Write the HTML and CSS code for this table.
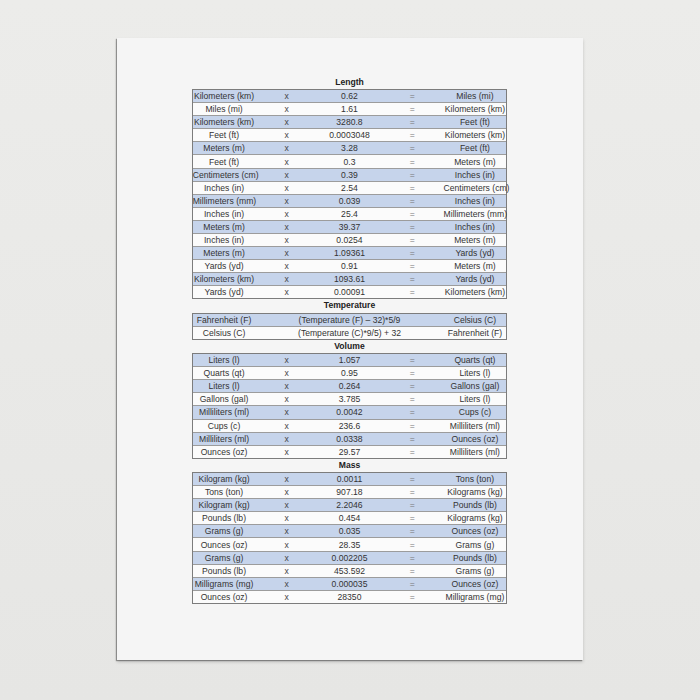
FILE: index.html
```html
<!DOCTYPE html>
<html>
<head>
<meta charset="utf-8">
<link rel="stylesheet" href="styles.css">
</head>
<body>
<div class="poster">
  <div class="sheet">
    <div class="title">Length</div>
    <div class="tbl">
      <div class="row b"><span>Kilometers (km)</span><span class="op">x</span><span>0.62</span><span class="eq">=</span><span>Miles (mi)</span></div>
      <div class="row"><span>Miles (mi)</span><span class="op">x</span><span>1.61</span><span class="eq">=</span><span>Kilometers (km)</span></div>
      <div class="row b"><span>Kilometers (km)</span><span class="op">x</span><span>3280.8</span><span class="eq">=</span><span>Feet (ft)</span></div>
      <div class="row"><span>Feet (ft)</span><span class="op">x</span><span>0.0003048</span><span class="eq">=</span><span>Kilometers (km)</span></div>
      <div class="row b"><span>Meters (m)</span><span class="op">x</span><span>3.28</span><span class="eq">=</span><span>Feet (ft)</span></div>
      <div class="row"><span>Feet (ft)</span><span class="op">x</span><span>0.3</span><span class="eq">=</span><span>Meters (m)</span></div>
      <div class="row b"><span>Centimeters (cm)</span><span class="op">x</span><span>0.39</span><span class="eq">=</span><span>Inches (in)</span></div>
      <div class="row"><span>Inches (in)</span><span class="op">x</span><span>2.54</span><span class="eq">=</span><span>Centimeters (cm)</span></div>
      <div class="row b"><span>Millimeters (mm)</span><span class="op">x</span><span>0.039</span><span class="eq">=</span><span>Inches (in)</span></div>
      <div class="row"><span>Inches (in)</span><span class="op">x</span><span>25.4</span><span class="eq">=</span><span>Millimeters (mm)</span></div>
      <div class="row b"><span>Meters (m)</span><span class="op">x</span><span>39.37</span><span class="eq">=</span><span>Inches (in)</span></div>
      <div class="row"><span>Inches (in)</span><span class="op">x</span><span>0.0254</span><span class="eq">=</span><span>Meters (m)</span></div>
      <div class="row b"><span>Meters (m)</span><span class="op">x</span><span>1.09361</span><span class="eq">=</span><span>Yards (yd)</span></div>
      <div class="row"><span>Yards (yd)</span><span class="op">x</span><span>0.91</span><span class="eq">=</span><span>Meters (m)</span></div>
      <div class="row b"><span>Kilometers (km)</span><span class="op">x</span><span>1093.61</span><span class="eq">=</span><span>Yards (yd)</span></div>
      <div class="row"><span>Yards (yd)</span><span class="op">x</span><span>0.00091</span><span class="eq">=</span><span>Kilometers (km)</span></div>
    </div>

    <div class="title">Temperature</div>
    <div class="tbl">
      <div class="row b"><span>Fahrenheit (F)</span><span class="wide">(Temperature (F) – 32)*5/9</span><span>Celsius (C)</span></div>
      <div class="row"><span>Celsius (C)</span><span class="wide">(Temperature (C)*9/5) + 32</span><span>Fahrenheit (F)</span></div>
    </div>

    <div class="title">Volume</div>
    <div class="tbl">
      <div class="row b"><span>Liters (l)</span><span class="op">x</span><span>1.057</span><span class="eq">=</span><span>Quarts (qt)</span></div>
      <div class="row"><span>Quarts (qt)</span><span class="op">x</span><span>0.95</span><span class="eq">=</span><span>Liters (l)</span></div>
      <div class="row b"><span>Liters (l)</span><span class="op">x</span><span>0.264</span><span class="eq">=</span><span>Gallons (gal)</span></div>
      <div class="row"><span>Gallons (gal)</span><span class="op">x</span><span>3.785</span><span class="eq">=</span><span>Liters (l)</span></div>
      <div class="row b"><span>Milliliters (ml)</span><span class="op">x</span><span>0.0042</span><span class="eq">=</span><span>Cups (c)</span></div>
      <div class="row"><span>Cups (c)</span><span class="op">x</span><span>236.6</span><span class="eq">=</span><span>Milliliters (ml)</span></div>
      <div class="row b"><span>Milliliters (ml)</span><span class="op">x</span><span>0.0338</span><span class="eq">=</span><span>Ounces (oz)</span></div>
      <div class="row"><span>Ounces (oz)</span><span class="op">x</span><span>29.57</span><span class="eq">=</span><span>Milliliters (ml)</span></div>
    </div>

    <div class="title">Mass</div>
    <div class="tbl">
      <div class="row b"><span>Kilogram (kg)</span><span class="op">x</span><span>0.0011</span><span class="eq">=</span><span>Tons (ton)</span></div>
      <div class="row"><span>Tons (ton)</span><span class="op">x</span><span>907.18</span><span class="eq">=</span><span>Kilograms (kg)</span></div>
      <div class="row b"><span>Kilogram (kg)</span><span class="op">x</span><span>2.2046</span><span class="eq">=</span><span>Pounds (lb)</span></div>
      <div class="row"><span>Pounds (lb)</span><span class="op">x</span><span>0.454</span><span class="eq">=</span><span>Kilograms (kg)</span></div>
      <div class="row b"><span>Grams (g)</span><span class="op">x</span><span>0.035</span><span class="eq">=</span><span>Ounces (oz)</span></div>
      <div class="row"><span>Ounces (oz)</span><span class="op">x</span><span>28.35</span><span class="eq">=</span><span>Grams (g)</span></div>
      <div class="row b"><span>Grams (g)</span><span class="op">x</span><span>0.002205</span><span class="eq">=</span><span>Pounds (lb)</span></div>
      <div class="row"><span>Pounds (lb)</span><span class="op">x</span><span>453.592</span><span class="eq">=</span><span>Grams (g)</span></div>
      <div class="row b"><span>Milligrams (mg)</span><span class="op">x</span><span>0.000035</span><span class="eq">=</span><span>Ounces (oz)</span></div>
      <div class="row"><span>Ounces (oz)</span><span class="op">x</span><span>28350</span><span class="eq">=</span><span>Milligrams (mg)</span></div>
    </div>
  </div>
</div>
</body>
</html>
```

FILE: styles.css
```css
html, body {
  margin: 0;
  padding: 0;
}
body {
  width: 700px;
  height: 700px;
  background: linear-gradient(#ececea, #e6e6e4);
  font-family: "Liberation Sans", Arial, sans-serif;
  overflow: hidden;
}
.poster {
  box-sizing: border-box;
  margin: 38px 0 0 117px;
  width: 466px;
  height: 622px;
  background: #f5f5f5;
  box-shadow: -1px 1px 1px rgba(0,0,0,0.35), 0 2px 3px rgba(0,0,0,0.18);
  padding-top: 37.8px;
}
.sheet {
  width: 315.6px;
  margin-left: 74.7px;
  display: flex;
  flex-direction: column;
}
.title {
  height: 13.2px;
  line-height: 13.2px;
  text-align: center;
  font-weight: bold;
  font-size: 8.6px;
  color: #222;
}
.tbl {
  border: 1px solid #7c7c7c;
  display: flex;
  flex-direction: column;
}
.row {
  box-sizing: border-box;
  height: 13.1px;
  display: grid;
  grid-template-columns: repeat(5, minmax(0, 1fr));
  align-items: center;
  background: #fbfbfb;
  border-bottom: 1px solid #9c9c9c;
  font-size: 8.6px;
  color: #333;
}
.row:last-child {
  border-bottom: none;
  height: 12.1px;
}
.row.b {
  background: #c6d4eb;
}
.row span {
  text-align: center;
  white-space: nowrap;
  line-height: 12px;
}
.row span.wide {
  grid-column: span 3;
}
.row span.op {
  color: #444;
}
.row span.eq {
  color: #777;
}
```
